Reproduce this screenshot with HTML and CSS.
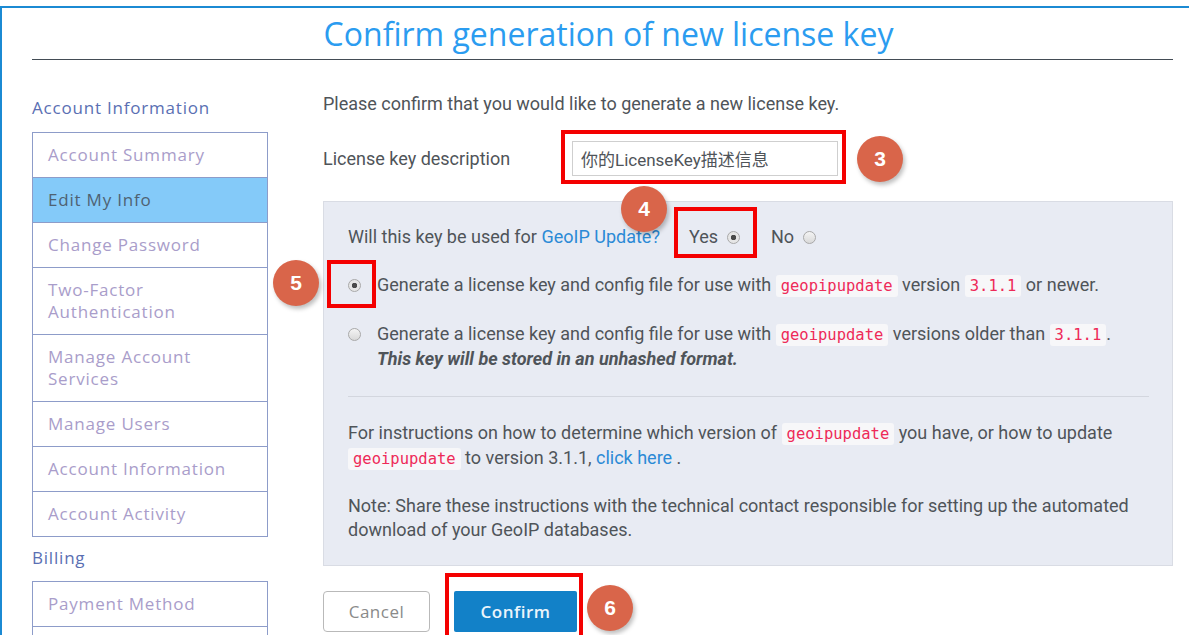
FILE: index.html
```html
<!DOCTYPE html>
<html lang="en">
    <head>
        <meta charset="UTF-8">
        <meta name="viewport" content="width=device-width, initial-scale=1.0">
        <title>Confirm generation of new license key</title>
        <link rel="stylesheet" href="styles.css">
    </head>
    <body>
        <div class="page">
            <h1 class="title">Confirm generation of new license key</h1>
            <hr class="title-rule">

            <div class="layout">
                <!-- account menu -->
                <aside class="sidebar">
                    <h3>Account Information</h3>
                    <ul class="menu">
                        <li>Account Summary</li>
                        <li class="active">Edit My Info</li>
                        <li>Change Password</li>
                        <li>Two-Factor Authentication</li>
                        <li>Manage Account Services</li>
                        <li>Manage Users</li>
                        <li>Account Information</li>
                        <li>Account Activity</li>
                    </ul>
                    <h3>Billing</h3>
                    <ul class="menu">
                        <li>Payment Method</li>
                        <li class="empty"></li>
                    </ul>
                </aside>

                <main class="main">
                    <p class="intro">Please confirm that you would like to generate a new license key.</p>

                    <div class="field">
                        <label for="desc">License key description</label>
                        <input type="text" id="desc" value="你的LicenseKey描述信息">
                    </div>

                    <div class="panel">
                        <div class="question">
                            <span>Will this key be used for <a href="#">GeoIP Update?</a></span>
                            <label class="choice">Yes <input type="radio" name="update" checked></label>
                            <label class="choice">No <input type="radio" name="update"></label>
                        </div>

                        <label class="option first">
                            <input type="radio" name="version" checked>
                            <span>Generate a license key and config file for use with <code>geopipupdate</code> version <code>3.1.1</code> or newer.</span>
                        </label>
                        <label class="option">
                            <input type="radio" name="version">
                            <span>Generate a license key and config file for use with <code>geoipupdate</code> versions older than <code>3.1.1</code>.<br><strong><em>This key will be stored in an unhashed format.</em></strong></span>
                        </label>

                        <hr class="panel-rule">

                        <p>For instructions on how to determine which version of <code>geoipupdate</code> you have, or how to update <code>geoipupdate</code> to version 3.1.1, <a href="#">click here</a> .</p>
                        <p class="note">Note: Share these instructions with the technical contact responsible for setting up the automated download of your GeoIP databases.</p>
                    </div>

                    <div class="actions">
                        <button type="button" class="btn-cancel">Cancel</button>
                        <button type="button" class="btn-confirm">Confirm</button>
                    </div>
                </main>
            </div>

            <!-- step markers -->
            <div class="mark mark-desc"></div>
            <div class="mark mark-yes"></div>
            <div class="mark mark-radio"></div>
            <div class="mark mark-confirm"></div>
            <span class="step step-3">3</span>
            <span class="step step-4">4</span>
            <span class="step step-5">5</span>
            <span class="step step-6">6</span>
        </div>
    </body>
</html>
```

FILE: styles.css
```css
*{
    margin: 0;
    padding: 0;
    box-sizing: border-box;
}
body{
    background-color: #ffffff;
    padding-top: 6px;
    font-family: Roboto, "Noto Sans CJK SC", sans-serif;
    font-size: 18px;
    color: #4f5459;
    overflow: hidden;
}
.page{
    position: relative;
    height: 629px;
    overflow: hidden;
    border-top: 2px solid #1b8ad3;
    border-left: 2px solid #1b8ad3;
    padding: 0 16px 0 30px;
}
.title{
    font-family: "Open Sans", sans-serif;
    font-weight: 400;
    font-size: 32px;
    line-height: 36px;
    color: #2b9cf0;
    text-align: center;
    padding: 8px 0 0 12px;
}
.title-rule{
    border: none;
    border-top: 1px solid #434c55;
    margin-top: 7px;
}

.layout{
    display: grid;
    grid-template-columns: 236px 1fr;
    column-gap: 55px;
}

/* sidebar */
.sidebar h3{
    font-family: "Open Sans", sans-serif;
    font-weight: 500;
    font-size: 17px;
    letter-spacing: 0.8px;
    color: #5a6fb3;
    line-height: 24px;
    margin: 36px 0 12px;
}
.sidebar h3 + .menu + h3{
    margin: 9px 0 11px;
}
.menu{
    list-style: none;
    border: 1px solid #8d9cc9;
}
.menu li{
    font-family: "Open Sans", sans-serif;
    font-weight: 400;
    font-size: 17px;
    letter-spacing: 0.8px;
    line-height: 22px;
    padding: 11px 15px;
    color: #a99dca;
    border-top: 1px solid #8d9cc9;
}
.menu li:first-child{
    border-top: none;
}
.menu li.active{
    background-color: #84caf9;
    color: #4f6273;
}
.menu li.empty{
    height: 44px;
}

/* main column */
.main{
    padding-top: 32px;
}
.intro{
    line-height: 24px;
}
.field{
    display: flex;
    align-items: center;
    margin-top: 25px;
}
.field label{
    width: 249px;
}
.field input{
    width: 266px;
    height: 35px;
    border: 1px solid #cfcfcf;
    padding: 0 8px;
    font-family: Roboto, "Noto Sans CJK SC", sans-serif;
    font-size: 17px;
    color: #4f5459;
}

.panel{
    margin-top: 25px;
    background-color: #e8ebf3;
    border: 1px solid #d9dce4;
    padding: 23px 23px 23px 24px;
    line-height: 24px;
}
a{
    color: #2b8ad6;
    text-decoration: none;
}
.question{
    display: flex;
    align-items: center;
}
.choice{
    display: flex;
    align-items: center;
    gap: 9px;
    margin-left: 29px;
}
.choice + .choice{
    margin-left: 31px;
}
input[type="radio"]{
    appearance: none;
    width: 13px;
    height: 13px;
    border-radius: 50%;
    border: 1px solid #a9a9a9;
    background: linear-gradient(#f4f4f4, #d9d9d9);
    flex-shrink: 0;
}
input[type="radio"]:checked{
    background: radial-gradient(circle, #4a4a4a 0 2.5px, #e6e6e6 3px);
}
.option{
    display: flex;
    align-items: flex-start;
    margin-top: 24px;
}
.option input{
    margin: 6px 16px 0 0;
}
code{
    font-family: "DejaVu Sans Mono", monospace;
    font-size: 15.5px;
    color: #ee2a58;
    background-color: #f7f7f9;
    border-radius: 3px;
    padding: 2px 5px;
}
.panel-rule{
    border: none;
    border-top: 1px solid #d3d6de;
    margin: 25px 0 24px;
}
.note{
    margin-top: 23px;
}

.actions{
    display: flex;
    gap: 24px;
    margin-top: 25px;
}
.actions button{
    font-family: "Open Sans", sans-serif;
    font-size: 17px;
    letter-spacing: 0.5px;
    height: 41px;
}
.btn-cancel{
    width: 107px;
    background-color: #ffffff;
    border: 1px solid #b9b9b9;
    border-radius: 4px;
    color: #8a8a8a;
}
.btn-confirm{
    width: 123px;
    height: 42px;
    background-color: #1281c8;
    border: none;
    border-radius: 2px;
    color: #eaf4fb;
    font-weight: 600;
}

/* red outlines and numbered circles */
.mark{
    position: absolute;
    border: 4px solid #f40000;
}
.mark-desc{ left: 559px; top: 122px; width: 285px; height: 54px; }
.mark-yes{ left: 672px; top: 199px; width: 83px; height: 51px; }
.mark-radio{ left: 325px; top: 252px; width: 49px; height: 48px; }
.mark-confirm{ left: 443px; top: 565px; width: 138px; height: 70px; }
.step{
    position: absolute;
    width: 46px;
    height: 46px;
    border-radius: 50%;
    background-color: #d9654a;
    box-shadow: 2px 3px 4px rgba(0, 0, 0, 0.25);
    color: #ffffff;
    font-family: "Liberation Sans", sans-serif;
    font-weight: 700;
    font-size: 21px;
    line-height: 46px;
    text-align: center;
}
.step-3{ left: 855px; top: 128px; }
.step-4{ left: 619px; top: 178px; }
.step-5{ left: 271px; top: 252px; }
.step-6{ left: 585px; top: 577px; }
```
